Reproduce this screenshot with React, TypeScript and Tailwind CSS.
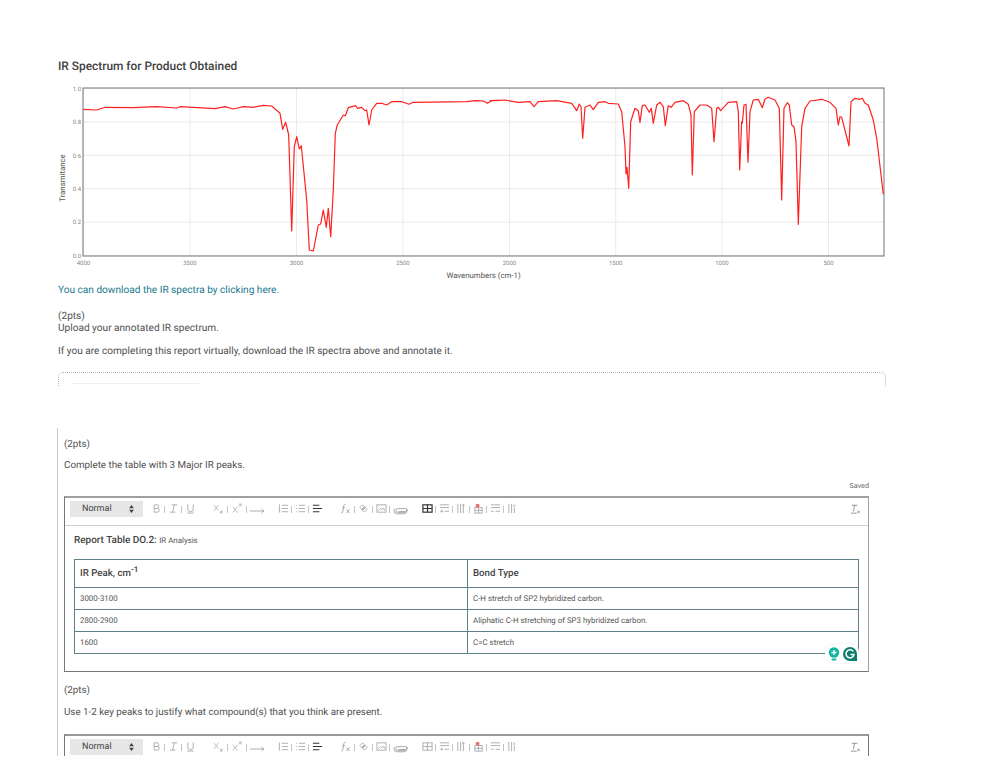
import React from "react";

const z1: number[][] = [[100,178],[140,180],[165,172],[250,173],[320,170],[380,174],[390,170],[430,172],[495,176],[525,170],[550,177],[580,170],[610,172],[640,166],[665,168],[690,190],[698,238],[707,217],[716,255],[725,543],[733,290],[740,260],[748,297],[754,287],[770,450],[778,600],[790,603],[805,525],[812,522],[820,480],[829,532],[835,475],[842,560],[850,420],[856,250],[862,225],[880,195],[886,197],[895,173],[917,167],[922,175],[935,172],[945,182],[950,180],[957,225],[965,180],[980,160],[995,160],[1010,165],[1025,155],[1055,155],[1077,163],[1090,157],[1250,155],[1275,152],[1300,153],[1312,160],[1325,152],[1350,151]];
const z2: number[][] = [[0,77],[45,75],[85,82],[120,80],[132,95],[145,80],[200,77],[245,85],[260,107],[268,87],[273,95],[278,190],[285,97],[300,90],[310,104],[325,82],[345,80],[355,85],[385,87],[395,110],[405,215],[408,297],[411,277],[416,340],[422,140],[435,100],[445,108],[450,142],[457,92],[465,90],[478,112],[484,100],[490,145],[500,90],[510,82],[520,95],[526,152],[535,92],[543,97],[555,82],[580,77],[595,88],[603,120],[607,300],[613,110],[630,90],[650,90],[665,100],[672,200],[680,100],[685,97],[692,107],[715,82],[740,80],[745,110],[749,285],[755,140],[757,145],[762,90],[768,88],[774,262],[780,110],[790,75],[805,73],[817,98],[825,72],[835,67],[855,75],[868,100],[875,375],[882,100],[892,83],[898,90],[905,150],[912,155],[918,200],[925,448],[935,155],[945,100],[960,78],[995,73],[1020,82],[1038,100],[1045,150],[1050,125],[1055,127],[1077,213],[1083,80],[1095,70],[1110,73],[1117,70],[1125,85],[1135,90],[1150,135],[1160,190],[1180,358]];
const spectrum =
  z1.map(([x, y]) => `${(50 + x / 3).toFixed(1)},${(50 + y / 3).toFixed(1)}`).join(" ") +
  " " +
  z2.map(([x, y]) => `${(490 + x / 3).toFixed(1)},${(75 + y / 3).toFixed(1)}`).join(" ");

function Chart() {
  const xs = [[83.5, "4000"], [190, "3500"], [296.5, "3000"], [403, "2500"], [509.5, "2000"], [615.7, "1500"], [722, "1000"], [828.5, "500"]] as [number, string][];
  const ys = [[88.5, "1.0"], [122, "0.8"], [155.3, "0.6"], [188.7, "0.4"], [222, "0.2"], [255.5, "0.0"]] as [number, string][];
  return (
    <svg viewBox="58 84 830 198" className="block w-[830px] h-[198px]" fontFamily="Roboto, sans-serif">
      {xs.map(([x, l]) => (
        <g key={l}>
          <line x1={x} x2={x} y1={88} y2={256} stroke="#e4e4e4" strokeWidth="0.8" />
          <text x={x} y={264.5} fontSize="6" fill="#888" textAnchor="middle">{l}</text>
        </g>
      ))}
      {ys.map(([y, l]) => (
        <g key={l}>
          <line x1={83} x2={884} y1={y} y2={y} stroke="#e4e4e4" strokeWidth="0.8" />
          <text x={81} y={y + 2.2} fontSize="6" fill="#888" textAnchor="end">{l}</text>
        </g>
      ))}
      <rect x="83" y="88" width="801" height="168" fill="none" stroke="#808080" strokeWidth="1.1" />
      <polyline points={spectrum} fill="none" stroke="#ff2020" strokeWidth="1.2" strokeLinejoin="round" />
      <text x="483.5" y="278" fontSize="7.8" fill="#555" textAnchor="middle">Wavenumbers (cm-1)</text>
      <text transform="translate(65 178) rotate(-90)" fontSize="7.8" fill="#555" textAnchor="middle">Transmitance</text>
    </svg>
  );
}

const G = ({ children, dark }: { children: React.ReactNode; dark?: boolean }) => (
  <svg viewBox="0 0 12 12" className="w-[11px] h-[11px]" fill="none" stroke={dark ? "#333" : "#aaa"} strokeWidth="1">
    {children}
  </svg>
);

const Bold = () => <G><path d="M3.500 2h3a2 2 0 0 1 0 4h-3zM3.500 6h3.500a2 2 0 0 1 0 4H3.500z" /></G>;
const Ital = () => <G><path d="M4 2h6M2 10h6M7 2 5 10" /></G>;
const Under = () => <G><path d="M3 1.500v5a3 3 0 0 0 6 0v-5M2.500 11h7" /></G>;
const Sub = () => <G><path d="m1 2 5 6.500M6 2 1 8.500M8 9h2v1H8v1h2.500" strokeWidth="0.8" /></G>;
const Sup = () => <G><path d="m1 4 5 6.500M6 4l-5 6.500M8 1h2v1H8v1h2.500" strokeWidth="0.8" /></G>;
const Arrow = () => (
  <svg viewBox="0 0 15 8" className="w-[15px] h-[8px] mt-[3px]" fill="none" stroke="#999" strokeWidth="0.8"><path d="M0 5h14M11.500 3 14 5l-2.500 2" /></svg>
);
const Ol = () => <G><path d="M4 2.500h7M4 6h7M4 9.500h7M1.500 1.500v9" /></G>;
const Ul = () => <G><path d="M4 2.500h7M4 6h7M4 9.500h7M1 2.500h1M1 6h1M1 9.500h1" /></G>;
const Align = () => <G dark><path d="M1 2.500h7M1 6h10M1 9.500h7" strokeWidth="1.200" /></G>;
const Fx = () => (
  <svg viewBox="0 0 12 12" className="w-[11px] h-[11px]" fill="none" stroke="#999" strokeWidth="0.9"><path d="M1.500 11c1.500 0 1.500-1 2-4.500s.8-5 2.500-5M2.500 5H5.500M7 7l3.500 4M10.500 7 7 11" /></svg>
);
const Link = () => <G><path d="m2 5 3-3 2 2-3 3zM5 8l3-3 2 2-3 3z" /><path d="m4 8 4-4" /></G>;
const Img = () => <G><rect x="1" y="2" width="10" height="8" /><path d="m2.500 8.500 2.500-2.500 1.500 1.500 1.500-2 2 3" /></G>;
const Clip = () => (
  <svg viewBox="0 0 16 9" className="w-[15px] h-[9px] mt-[3px]" fill="none" stroke="#999" strokeWidth="0.9"><path d="M13 6.500H5a2 2 0 0 1 0-4h8.500a1.500 1.500 0 0 1 0 3H6" /><path d="M15 3v1.500a3.500 3.500 0 0 1-3.500 3.500H4.500a3.500 3.500 0 0 1-3.500-3.500 3 3 0 0 1 1-2" /></svg>
);
const Table = ({ dark }: { dark?: boolean }) => (
  <G dark={dark}><rect x="1" y="2" width="10" height="8" strokeWidth={dark ? 1.3 : 1} /><path d="M1 6h10M6 2v8" strokeWidth={dark ? 1.3 : 1} /></G>
);
const RowAdd = () => <G><path d="M1 2h10M1 5h10M3 7.500v3M1.500 9h3M6 9h5" /></G>;
const ColAdd = () => <G><path d="M2 1v10M5 1v10M8 4v7M6.500 2.500h3M8 1v3" /></G>;
const DelTable = () => (
  <svg viewBox="0 0 12 12" className="w-[11px] h-[11px]" fill="none" stroke="#aaa" strokeWidth="1"><rect x="2" y="5" width="8" height="6" /><path d="M2 8h8M6 5v6" /><circle cx="5" cy="3" r="2.200" fill="#e57373" stroke="none" /></svg>
);
const RowDel = () => <G><path d="M1 2h10M1 5h10M1 9h3M6 9h5" /></G>;
const ColDel = () => <G><path d="M2 1v10M5 1v10M8 5v6M7 2l2 2M9 2 7 4" /></G>;

const Sep = () => <span className="w-px h-[7px] bg-[#c4c4c4] shrink-0" />;
const Btn = ({ children, w = "w-[16px]" }: { children: React.ReactNode; w?: string }) => (
  <span className={`${w} h-[12px] flex justify-center items-start shrink-0`}>{children}</span>
);

function Toolbar({ firstTableDark }: { firstTableDark?: boolean }) {
  return (
    <div className="flex items-start h-[28px] pt-[3px] pl-[5px] pr-[8px] border-b border-[#cfcfcf]">
      <div className="w-[73px] h-[16px] bg-[#e6e6e6] flex items-center justify-between pl-[12px] pr-[9px] text-[9px] font-normal text-[#444]">
        <span>Normal</span>
        <svg viewBox="0 0 6 10" className="w-[5px] h-[8px]" fill="#444"><path d="M3 0 6 4H0zM3 10 0 6h6z" /></svg>
      </div>
      <div className="flex items-center ml-[5px] mt-[2px]">
        <Btn><Bold /></Btn><Sep /><Btn><Ital /></Btn><Sep /><Btn><Under /></Btn>
      </div>
      <div className="flex items-center ml-[11px] mt-[2px]">
        <Btn w="w-[18px]"><Sub /></Btn><Sep /><Btn w="w-[18px]"><Sup /></Btn><Sep /><Btn w="w-[20px]"><Arrow /></Btn>
      </div>
      <div className="flex items-center ml-[8px] mt-[2px]">
        <Btn><Ol /></Btn><Sep /><Btn><Ul /></Btn><Sep /><Btn><Align /></Btn>
      </div>
      <div className="flex items-center ml-[12px] mt-[2px]">
        <Btn w="w-[17px]"><Fx /></Btn><Sep /><Btn w="w-[17px]"><Link /></Btn><Sep /><Btn><Img /></Btn><Sep /><Btn w="w-[20px]"><Clip /></Btn>
      </div>
      <div className="flex items-center ml-[9px] mt-[2px]">
        <Btn><Table dark={firstTableDark} /></Btn><Sep /><Btn><RowAdd /></Btn><Sep /><Btn><ColAdd /></Btn><Sep /><Btn><DelTable /></Btn><Sep /><Btn><RowDel /></Btn><Sep /><Btn><ColDel /></Btn>
      </div>
      <svg viewBox="0 0 12 12" className="w-[10px] h-[10px] ml-auto mt-[3px]" fill="none" stroke="#777" strokeWidth="0.9"><path d="M2 1.500h7M5.500 1.500 4 9M1 11h7M9 8l2.500 3M11.500 8 9 11" /></svg>
    </div>
  );
}

const td = "border border-[#5f8086] px-[5px] h-[22px] text-[7.9px] text-[#555]";
const th = "border border-[#5f8086] px-[5px] h-[28px] text-[9.7px] font-medium text-[#444] text-left";

export default function App() {
  return (
    <div className="h-[756px] overflow-hidden bg-white text-[#505050] text-[10.1px] leading-[12px] [text-rendering:geometricPrecision] font-['Roboto',sans-serif]">
      <div className="pl-[58px] pt-[59px] w-[886px]">
        <h2 className="text-[11.9px] leading-[14px] font-medium text-[#3f3f3f] w-max">IR Spectrum for Product Obtained</h2>
        <div className="mt-[11px]"><Chart /></div>
        <p className="text-[#1b7a8e] mt-[3px]">You can download the IR spectra by clicking here.</p>
        <p className="mt-[14px]">(2pts)</p>
        <p>Upload your annotated IR spectrum.</p>
        <p className="mt-[11px]">If you are completing this report virtually, download the IR spectra above and annotate it.</p>
        <div className="mt-[14px] w-[828px] h-[14px] overflow-hidden">
          <div className="h-[40px] border border-dotted border-[#b5b5b5] rounded-[5px] pt-[10px] pl-[10px]">
            <div className="w-[132px] h-[20px] border-t border-[#f0f0f0] rounded-[4px]" />
          </div>
        </div>
      </div>

      <div className="ml-[57px] mt-[42px] w-[812px] border-l border-[#c8c8c8] pl-[6px] pt-[11px] text-[9.8px] pb-[40px]">
        <p>(2pts)</p>
        <p className="mt-[9px]">Complete the table with 3 Major IR peaks.</p>
        <p className="text-right text-[7.2px] leading-[9px] text-[#666] mt-[9px]">Saved</p>
        <div className="relative mt-[6px] border border-[#777] border-t-2 border-t-[#a0a0a0] border-r-[#a0a0a0]">
          <Toolbar firstTableDark />
          <div className="px-[9px] pt-[9px] pb-[17px]">
            <p className="text-[9.96px] leading-[12px] font-medium text-[#444]">
              Report Table DO.2: <span className="text-[7.9px] font-normal text-[#555]">IR Analysis</span>
            </p>
            <table className="mt-[12px] w-[785px] table-fixed border-collapse">
              <colgroup>
                <col className="w-[393px]" />
                <col />
              </colgroup>
              <tbody>
                <tr>
                  <th className={th}>IR Peak, cm<sup className="text-[8px] font-semibold">-1</sup></th>
                  <th className={th}>Bond Type</th>
                </tr>
                <tr><td className={td}>3000-3100</td><td className={td}>C-H stretch of SP2 hybridized carbon.</td></tr>
                <tr><td className={td}>2800-2900</td><td className={td}>Aliphatic C-H stretching of SP3 hybridized carbon.</td></tr>
                <tr><td className={td}>1600</td><td className={td}>C=C stretch</td></tr>
              </tbody>
            </table>
          </div>
          <div className="absolute right-[9px] bottom-[8px] w-[34px] h-[19px] bg-white rounded-[8px] flex items-center justify-center gap-[3px] shadow-[0_0_2px_rgba(0,0,0,0.12)]">
            <svg viewBox="0 0 12 14" className="w-[12px] h-[14px]"><circle cx="6" cy="5.500" r="5.200" fill="#15b5a0" /><path d="M6 3v5M3.500 5.500h5" stroke="#fff" strokeWidth="1.300" /><rect x="3.500" y="11.500" width="5" height="2" rx="1" fill="#15b5a0" /></svg>
            <svg viewBox="0 0 14 14" className="w-[14px] h-[14px]"><path d="M7 0a7 7 0 0 1 7 7v7H7A7 7 0 0 1 7 0z" fill="#0b7f6b" /><path d="M10.300 4.500A4 4 0 1 0 11 7.500H7.500" fill="none" stroke="#fff" strokeWidth="1.500" /></svg>
          </div>
        </div>
        <p className="mt-[13px]">(2pts)</p>
        <p className="mt-[10px]">Use 1-2 key peaks to justify what compound(s) that you think are present.</p>
        <div className="mt-[15px] border border-[#777] border-t-2 border-t-[#999]">
          <Toolbar />
        </div>
      </div>
    </div>
  );
}
